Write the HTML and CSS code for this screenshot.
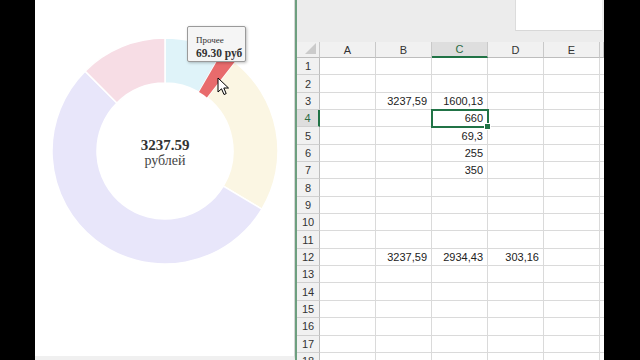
FILE: index.html
```html
<!DOCTYPE html>
<html lang="ru">
<head>
  <meta charset="UTF-8">
  <meta name="viewport" content="width=device-width, initial-scale=1">
  <title>Расходы - диаграмма</title>
  <link rel="stylesheet" href="styles.css">
</head>
<body>

  <div class="screen">
    <div class="side-bar"></div>

    <!-- Chart panel -->
    <div class="chart-panel">
      <svg class="donut" width="259" height="356" viewBox="0 0 259 356">
        <g class="slices">
          <path fill="#dff3f9" d="M130 38 A113 113 0 0 1 186.5 53.14 L164 92.11 A68 68 0 0 0 130 83 Z"/>
          <path fill="#fbf6e3" d="M199.57 61.96 A113 113 0 0 1 226.86 209.2 L188.29 186.02 A68 68 0 0 0 171.87 97.42 Z"/>
          <path fill="#e8e6fa" d="M226.86 209.2 A113 113 0 1 1 50.1 71.1 L81.92 102.92 A68 68 0 1 0 188.29 186.02 Z"/>
          <path fill="#f7dde5" d="M50.1 71.1 A113 113 0 0 1 130 38 L130 83 A68 68 0 0 0 81.92 102.92 Z"/>
          <path class="active" fill="#e86b6c" d="M186.5 53.14 A113.5 113.5 0 0 1 199.57 61.96 L171.87 97.42 A68 68 0 0 0 164 92.11 Z"/>
        </g>
        <text class="total" x="130" y="150">3237.59</text>
        <text class="unit" x="130" y="165">рублей</text>
      </svg>

      <div class="tooltip">
        <div class="tooltip-label">Прочее</div>
        <div class="tooltip-value">69.30 руб</div>
      </div>

      <svg class="cursor" width="13" height="20" viewBox="0 0 13 20">
        <path d="M1 1 L1 15 L4.5 11.8 L7 17.5 L9.2 16.6 L6.8 11 L11.5 11 Z" fill="#fff" stroke="#000" stroke-width="1" stroke-linejoin="round"/>
      </svg>
    </div>

    <!-- Spreadsheet -->
    <div class="excel">
      <div class="ribbon">
        <div class="name-box"></div>
      </div>

      <div class="sheet">
        <div class="row head">
          <span class="corner"><i></i></span><span>A</span><span>B</span><span class="sel-col">C</span><span>D</span><span>E</span><span></span>
        </div>
        <div class="row"><span class="rh">1</span><span></span><span></span><span></span><span></span><span></span><span></span></div>
        <div class="row"><span class="rh">2</span><span></span><span></span><span></span><span></span><span></span><span></span></div>
        <div class="row"><span class="rh">3</span><span></span><span>3237,59</span><span>1600,13</span><span></span><span></span><span></span></div>
        <div class="row"><span class="rh sel-row">4</span><span></span><span></span><span class="active-cell">660</span><span></span><span></span><span></span></div>
        <div class="row"><span class="rh">5</span><span></span><span></span><span>69,3</span><span></span><span></span><span></span></div>
        <div class="row"><span class="rh">6</span><span></span><span></span><span>255</span><span></span><span></span><span></span></div>
        <div class="row"><span class="rh">7</span><span></span><span></span><span>350</span><span></span><span></span><span></span></div>
        <div class="row"><span class="rh">8</span><span></span><span></span><span></span><span></span><span></span><span></span></div>
        <div class="row"><span class="rh">9</span><span></span><span></span><span></span><span></span><span></span><span></span></div>
        <div class="row"><span class="rh">10</span><span></span><span></span><span></span><span></span><span></span><span></span></div>
        <div class="row"><span class="rh">11</span><span></span><span></span><span></span><span></span><span></span><span></span></div>
        <div class="row"><span class="rh">12</span><span></span><span>3237,59</span><span>2934,43</span><span>303,16</span><span></span><span></span></div>
        <div class="row"><span class="rh">13</span><span></span><span></span><span></span><span></span><span></span><span></span></div>
        <div class="row"><span class="rh">14</span><span></span><span></span><span></span><span></span><span></span><span></span></div>
        <div class="row"><span class="rh">15</span><span></span><span></span><span></span><span></span><span></span><span></span></div>
        <div class="row"><span class="rh">16</span><span></span><span></span><span></span><span></span><span></span><span></span></div>
        <div class="row"><span class="rh">17</span><span></span><span></span><span></span><span></span><span></span><span></span></div>
        <div class="row"><span class="rh">18</span><span></span><span></span><span></span><span></span><span></span><span></span></div>
      </div>
    </div>

    <div class="side-bar side-bar-right"></div>
  </div>

</body>
</html>
```

FILE: styles.css
```css
/* Basic Reset */
* {
  box-sizing: border-box;
  margin: 0;
  padding: 0;
}

body {
  background-color: #000;
  width: 640px;
  height: 360px;
  overflow: hidden;
}

.screen {
  display: flex;
  height: 360px;
}

.side-bar {
  width: 35px;
  flex: none;
  background-color: #000;
}

.side-bar-right {
  width: 36px;
}

/* Chart panel */
.chart-panel {
  position: relative;
  width: 260px;
  flex: none;
  background-color: #fff;
  border-right: 1px solid #d6d6d6;
  border-bottom: 4px solid #f0f0f0;
}

.donut {
  display: block;
}

.slices path {
  stroke: #fff;
  stroke-width: 1.5;
}

.slices path.active {
  stroke: none;
}

.donut text {
  font-family: "Liberation Serif", "Times New Roman", serif;
  text-anchor: middle;
  fill: #333;
}

.donut .total {
  font-size: 15px;
  font-weight: bold;
}

.donut .unit {
  font-size: 14px;
  fill: #444;
}

.tooltip {
  position: absolute;
  left: 152px;
  top: 26px;
  width: 59px;
  height: 36px;
  padding: 8px 0 0 8px;
  background-color: #f5f5f5;
  border: 1px solid #9a9a9a;
  border-radius: 2px;
  box-shadow: 1px 1px 3px rgba(0, 0, 0, 0.25);
  font-family: "Liberation Serif", "Times New Roman", serif;
  color: #333;
}

.tooltip-label {
  font-size: 9px;
  line-height: 10px;
}

.tooltip-value {
  font-size: 11.5px;
  font-weight: bold;
  line-height: 16px;
  white-space: nowrap;
}

.cursor {
  position: absolute;
  left: 182px;
  top: 77px;
}

/* Spreadsheet */
.excel {
  flex: 1;
  overflow: hidden;
  background-color: #fff;
  border-left: 2px solid #6d9f7f;
  font-family: "Liberation Sans", Arial, sans-serif;
  font-size: 11px;
  color: #222;
}

.ribbon {
  height: 42px;
  padding-left: 218px;
  background-color: #ececec;
}

.name-box {
  width: 87px;
  height: 31px;
  background-color: #fff;
  border-bottom: 1px solid #d8d8d8;
  border-left: 1px solid #dcdcdc;
}

.row {
  display: grid;
  grid-template-columns: 23px repeat(5, 56px) 1fr;
  height: 17.35px;
}

.row span {
  display: flex;
  align-items: center;
  justify-content: flex-end;
  padding-right: 4px;
  border-right: 1px solid #dadada;
  border-bottom: 1px solid #dadada;
  white-space: nowrap;
}

.row.head {
  height: 16px;
}

.row.head span {
  justify-content: center;
  padding: 0;
  background-color: #f1f1f1;
  border-right-color: #c9c9c9;
  border-bottom-color: #bdbdbd;
  color: #333;
}

.row.head .sel-col {
  background-color: #dedede;
  border-bottom: 2px solid #217346;
  color: #2b6b43;
}

.corner {
  position: relative;
}

.corner i {
  position: absolute;
  right: 3px;
  bottom: 3px;
  width: 0;
  height: 0;
  border-left: 11px solid transparent;
  border-bottom: 11px solid #cbcbcb;
}

.row .rh {
  justify-content: center;
  padding: 0;
  background-color: #f1f1f1;
  border-right-color: #bdbdbd;
  border-bottom-color: #d0d0d0;
  color: #333;
}

.row .rh.sel-row {
  background-color: #dedede;
  border-right: 2px solid #217346;
  color: #2b6b43;
}

.active-cell {
  position: relative;
  outline: 2px solid #217346;
  outline-offset: -1px;
}

.active-cell::after {
  content: "";
  position: absolute;
  right: -4px;
  bottom: -4px;
  width: 5px;
  height: 5px;
  background-color: #217346;
  border: 1px solid #fff;
}
```
